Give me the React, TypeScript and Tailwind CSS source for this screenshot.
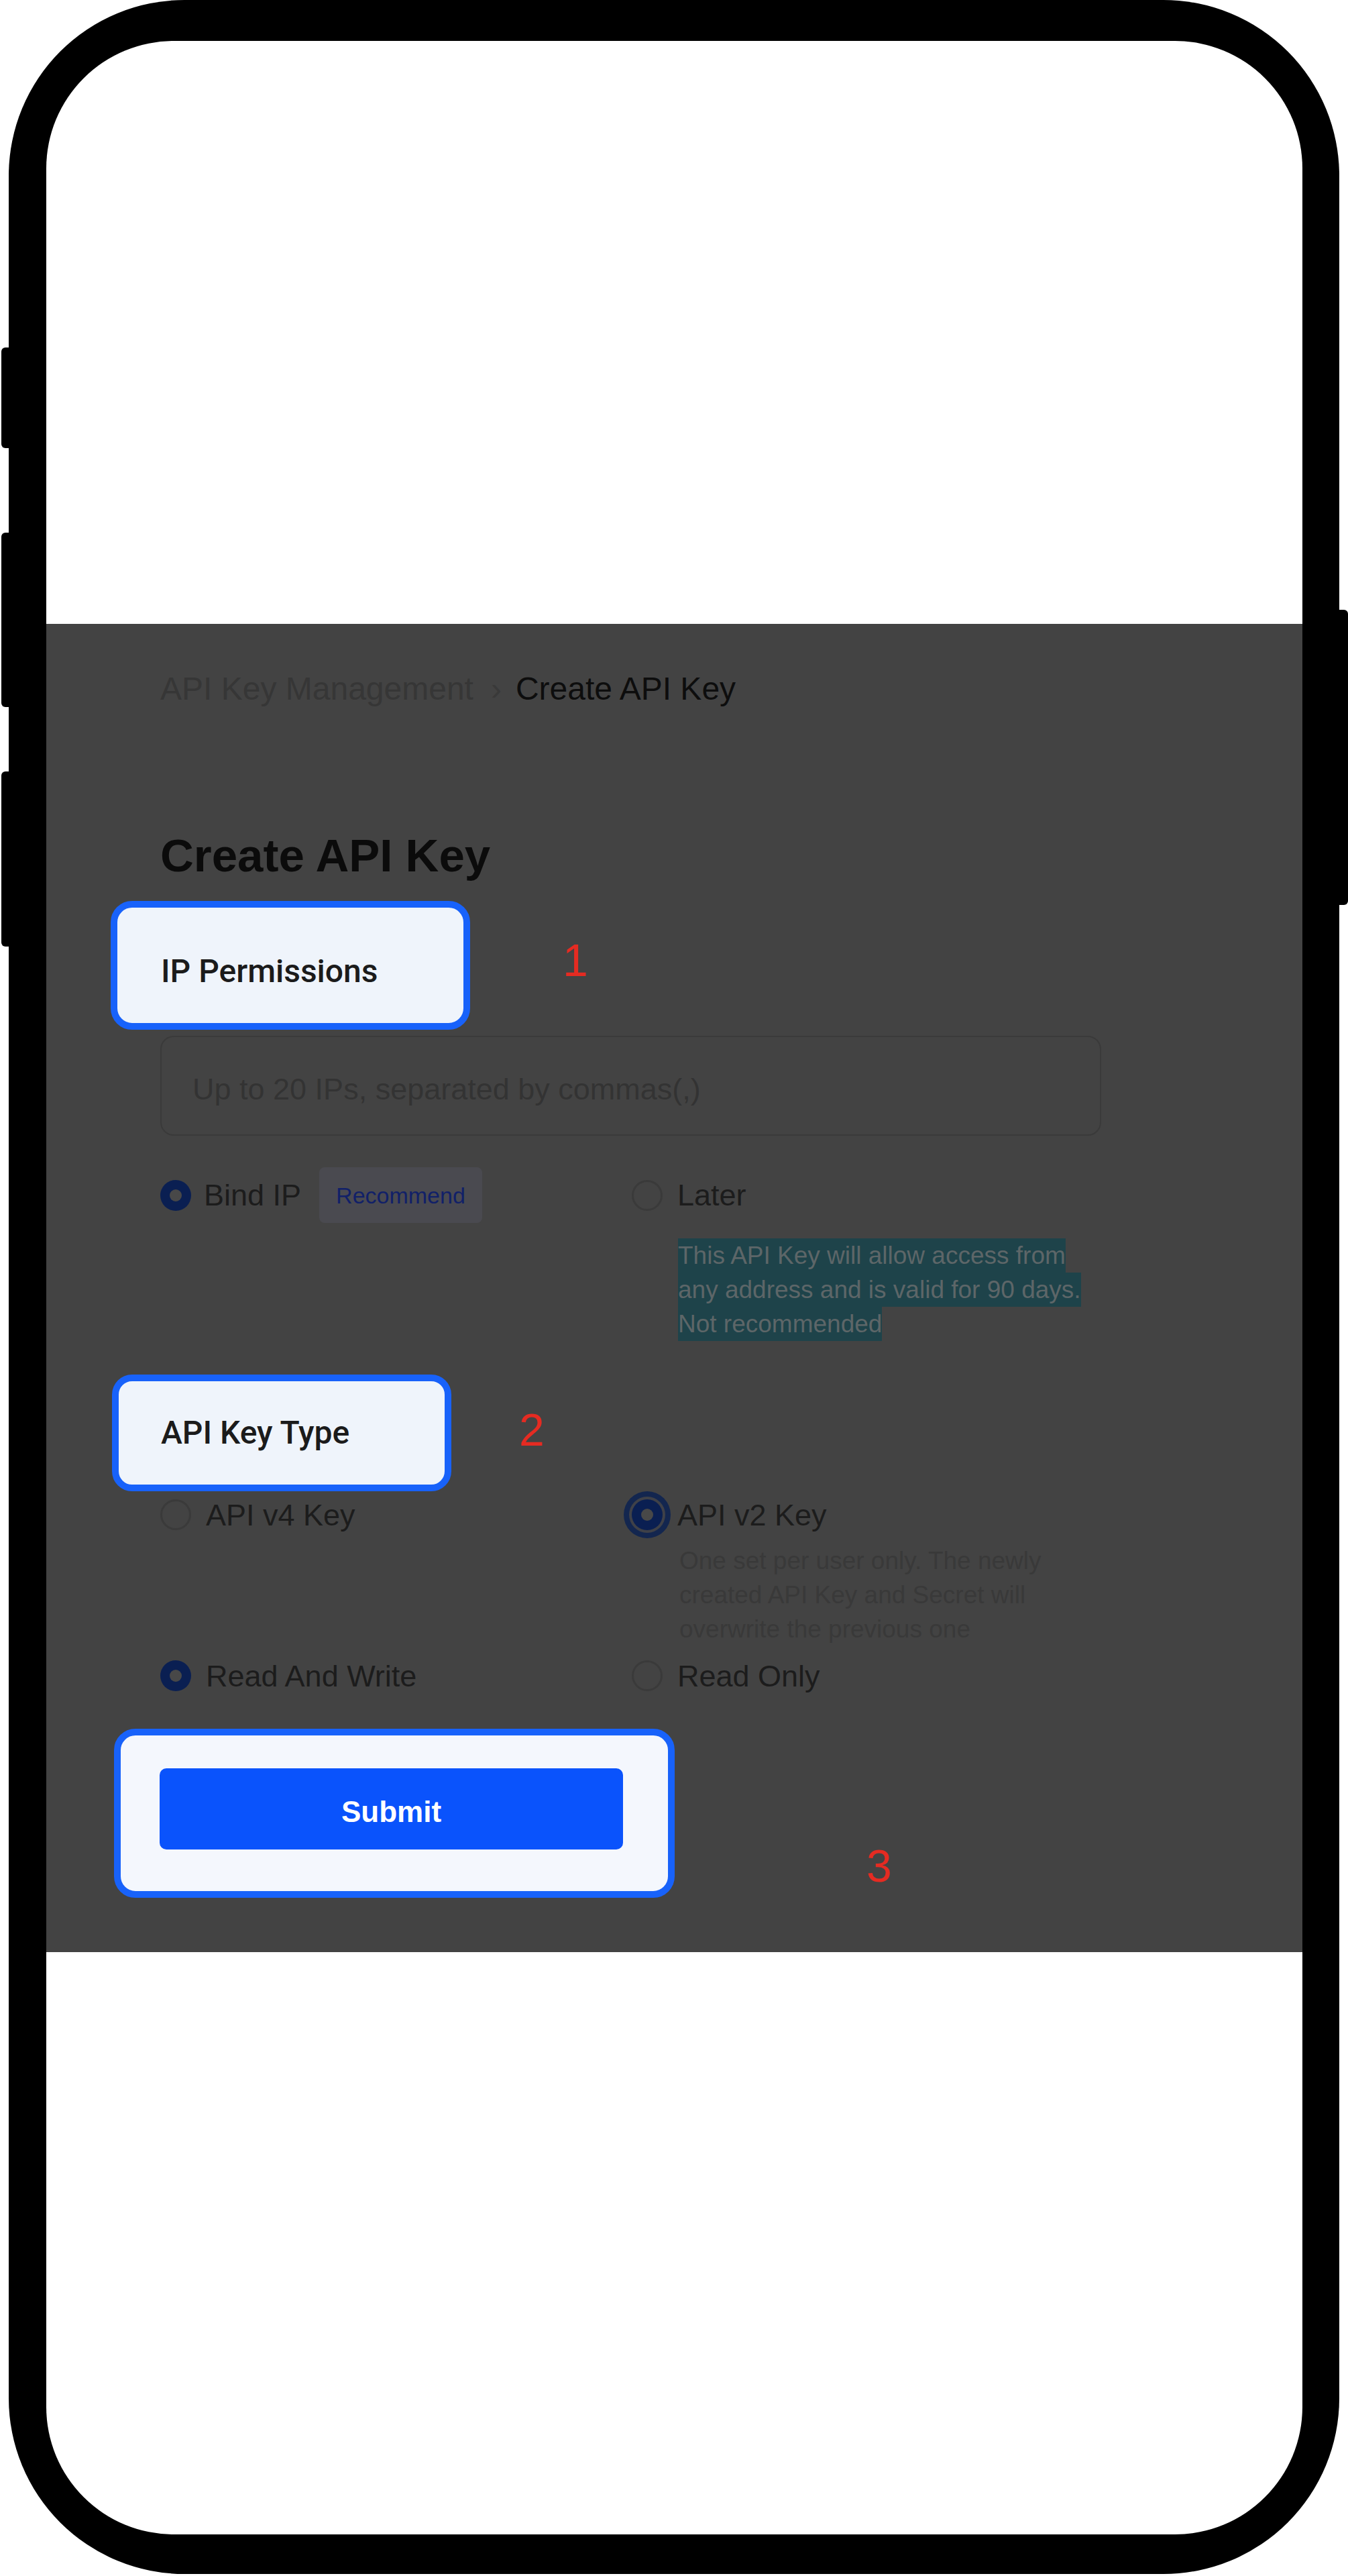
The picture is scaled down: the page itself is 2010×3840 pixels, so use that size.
import React from "react";

type RadioProps = { checked?: boolean; ring?: boolean };

// Radio dot used by the option rows
function Radio({ checked = false, ring = false }: RadioProps) {
  if (checked) {
    return (
      <span
        className={
          ring
            ? "flex h-[46px] w-[46px] shrink-0 items-center justify-center rounded-full bg-[#0a1f52] shadow-[0_0_0_4px_#3f4148,0_0_0_12px_#13264f]"
            : "flex h-[46px] w-[46px] shrink-0 items-center justify-center rounded-full bg-[#0a1f52]"
        }
      >
        <span className="h-[18px] w-[18px] rounded-full bg-[#484848]" />
      </span>
    );
  }
  return <span className="h-[46px] w-[46px] shrink-0 rounded-full border-[3px] border-[#3a3a3a]" />;
}

function Option({ checked, ring, label }: { checked?: boolean; ring?: boolean; label: string }) {
  return (
    <div className="flex h-[46px] items-center">
      <Radio checked={checked} ring={ring} />
      <span className="ml-[22px] text-[45px] leading-none text-[#1c1c1c]">{label}</span>
    </div>
  );
}

function Step({ n }: { n: string }) {
  return <span className="text-[68px] leading-none text-[#e52b22]">{n}</span>;
}

export default function App() {
  return (
    <div className="h-[3840px] w-[2010px] overflow-hidden bg-white pl-[13px] font-['Liberation_Sans',Arial,sans-serif]">
      {/* phone body */}
      <div className="relative h-[3837px] w-[1984px] rounded-[262px] bg-black pb-[59px] pl-[56px] pr-[55px] pt-[61px]">
        {/* side keys */}
        <span className="absolute left-[-11px] top-[518px] h-[150px] w-[11px] rounded-l-[6px] bg-black" />
        <span className="absolute left-[-11px] top-[794px] h-[260px] w-[11px] rounded-l-[6px] bg-black" />
        <span className="absolute left-[-11px] top-[1150px] h-[261px] w-[11px] rounded-l-[6px] bg-black" />
        <span className="absolute left-[1984px] top-[909px] h-[440px] w-[13px] rounded-r-[6px] bg-black" />

        {/* screen */}
        <div className="flex h-full flex-col overflow-hidden rounded-[190px] bg-white">
          <div className="h-[869px] shrink-0" />

          <div className="flex h-[1980px] shrink-0 flex-col bg-[#434343] pl-[170px]">
            {/* breadcrumb */}
            <div className="mt-[67px] flex h-[60px] items-center text-[48px] leading-[60px]">
              <span className="text-[#363636]">API Key Management</span>
              <span className="ml-[26px] mr-[21px] text-[#393939]">›</span>
              <span className="text-[#0d0d0d]">Create API Key</span>
            </div>

            <div className="mt-[179px] h-[80px] text-[69px] font-bold leading-[80px] text-[#0b0b0b]">Create API Key</div>

            {/* IP permissions */}
            <div className="mt-[27px] flex items-start">
              <div className="ml-[-74px] flex h-[192px] w-[536px] shrink-0 items-center rounded-[32px] border-[10px] border-[#1862fa] bg-[#eff4fb] pl-[65px] pt-[18px] font-['Roboto',sans-serif] text-[48px] font-medium leading-none text-[#1b1b1b]">
                IP Permissions
              </div>
              <div className="ml-[138px] mt-[54px]">
                <Step n="1" />
              </div>
            </div>

            <div className="mt-[9px] flex h-[149px] w-[1403px] items-center rounded-[20px] border-2 border-[#3a3a3a] pl-[46px] pt-[10px] text-[45px] leading-none text-[#333333]">
              Up to 20 IPs, separated by commas(,)
            </div>

            <div className="mt-[47px] grid grid-cols-[703px_1fr]">
              <div className="flex h-[83px] items-center">
                <Radio checked />
                <span className="ml-[19px] text-[45px] leading-none text-[#1c1c1c]">Bind IP</span>
                <span className="ml-[27px] flex h-[83px] items-center rounded-[8px] bg-[#4a4a50] px-[25px] text-[34px] leading-none text-[#112068]">
                  Recommend
                </span>
              </div>
              <div className="flex flex-col">
                <div className="flex h-[83px] items-center">
                  <Radio />
                  <span className="ml-[22px] text-[45px] leading-none text-[#1c1c1c]">Later</span>
                </div>
                <div className="ml-[69px] mt-[23px] text-[37px] leading-[51px] text-[#5d6668]">
                  <div className="w-fit bg-[#1e434a]">This API Key will allow access from</div>
                  <div className="w-fit bg-[#1e434a]">any address and is valid for 90 days.</div>
                  <div className="w-fit bg-[#1e434a]">Not recommended</div>
                </div>
              </div>
            </div>

            {/* key type */}
            <div className="mt-[50px] flex items-start">
              <div className="ml-[-72px] flex h-[174px] w-[506px] shrink-0 items-center rounded-[30px] border-[10px] border-[#1862fa] bg-[#eff4fb] pl-[63px] font-['Roboto',sans-serif] text-[48px] font-medium leading-none text-[#1b1b1b]">
                API Key Type
              </div>
              <div className="ml-[101px] mt-[48px]">
                <Step n="2" />
              </div>
            </div>

            <div className="mt-[12px] grid grid-cols-[703px_1fr]">
              <Option label="API v4 Key" />
              <div className="flex flex-col">
                <Option checked ring label="API v2 Key" />
                <div className="ml-[71px] mt-[20px] text-[37px] leading-[51px] text-[#393939]">
                  <div>One set per user only. The newly</div>
                  <div>created API Key and Secret will</div>
                  <div>overwrite the previous one</div>
                </div>
              </div>
            </div>

            <div className="mt-[21px] grid grid-cols-[703px_1fr]">
              <Option checked label="Read And Write" />
              <Option label="Read Only" />
            </div>

            {/* submit */}
            <div className="mt-[56px] flex items-start">
              <div className="ml-[-69px] h-[252px] w-[836px] shrink-0 rounded-[32px] border-[10px] border-[#1862fa] bg-[#f4f7fd] pl-[58px] pt-[49px]">
                <div className="flex h-[121px] w-[691px] items-center justify-center rounded-[10px] bg-[#0a53fc] pt-[8px] text-[44px] font-bold leading-none text-white">
                  Submit
                </div>
              </div>
              <div className="ml-[286px] mt-[170px]">
                <Step n="3" />
              </div>
            </div>
          </div>

          <div className="flex-1" />
        </div>
      </div>
    </div>
  );
}
